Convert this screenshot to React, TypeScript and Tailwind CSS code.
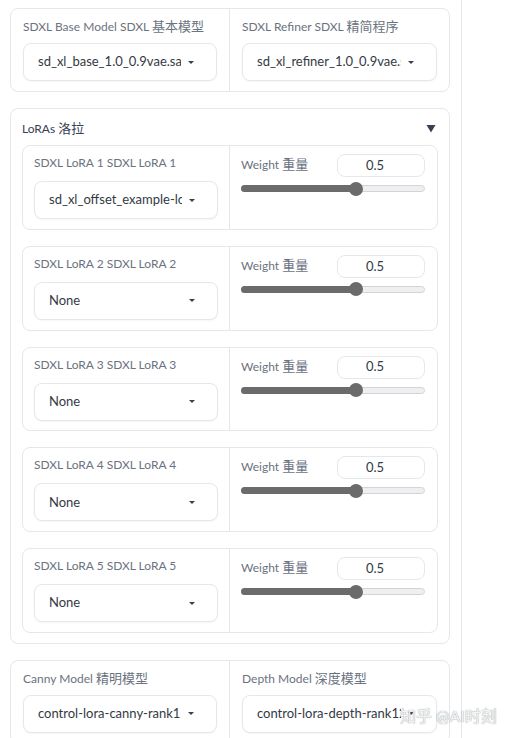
import React from "react";

const font = { fontFamily: 'Lato, "Noto Sans CJK SC", sans-serif' };

// CJK runs render a touch larger than the Latin text, like the original font pairing
function Txt({ children }: { children: string }) {
  const parts = children.split(/([\u4e00-\u9fff]+)/);
  return (
    <>
      {parts.map((p, i) =>
        /[\u4e00-\u9fff]/.test(p) ? (
          <span key={i} className="text-[13px]">
            {p}
          </span>
        ) : (
          <React.Fragment key={i}>{p}</React.Fragment>
        )
      )}
    </>
  );
}

function Caret() {
  return (
    <svg width="8" height="5" viewBox="0 0 8 5" className="shrink-0">
      <polygon points="1,1 7,1 4,4" fill="#374151" />
    </svg>
  );
}

function Dropdown({ value }: { value: string }) {
  return (
    <div className="flex h-[38px] items-center rounded-lg border border-[#e5e7eb] bg-white pl-[14px] pr-[21px] shadow-[0_1px_2px_rgba(0,0,0,0.04)]">
      <div className="flex-1 overflow-hidden whitespace-nowrap text-[13px] text-[#333a44]">
        {value}
      </div>
      <div className="ml-[6px]">
        <Caret />
      </div>
    </div>
  );
}

function Field({ label, value }: { label: string; value: string }) {
  return (
    <div className="px-3 pt-[8px] pb-[10px]">
      <div className="mb-[8px] h-[18px] whitespace-nowrap text-[12px] leading-[18px] text-[#6b7280]">
        <Txt>{label}</Txt>
      </div>
      <Dropdown value={value} />
    </div>
  );
}

function Slider({ value, min, max }: { value: number; min: number; max: number }) {
  const pct = ((value - min) / (max - min)) * 100;
  return (
    <div className="relative h-[14px]">
      <div className="absolute left-0 right-0 top-[4px] h-[7px] rounded-full border border-[#d1d5db] bg-[#efefef]" />
      <div
        className="absolute left-0 top-[4px] h-[7px] rounded-full bg-[#6b6b6b]"
        style={{ width: `${pct}%` }}
      />
      <div
        className="absolute top-[0.5px] h-[14px] w-[14px] -translate-x-1/2 rounded-full bg-[#6b6b6b]"
        style={{ left: `${pct}%` }}
      />
    </div>
  );
}

function LoraRow({ n, value }: { n: number; value: string }) {
  return (
    <div className="grid h-[84.75px] grid-cols-2 rounded-lg border border-[#e5e7eb]">
      <div className="border-r border-[#e5e7eb] px-[11px] pt-[8px]">
        <div className="mb-[9px] h-[18px] whitespace-nowrap text-[12px] leading-[18px] text-[#6b7280]">
          SDXL LoRA {n} SDXL LoRA {n}
        </div>
        <Dropdown value={value} />
      </div>
      <div className="pl-[11px] pr-[12px] pt-[8px]">
        <div className="flex items-start justify-between">
          <div className="mt-[1px] whitespace-nowrap text-[12px] leading-[18px] text-[#6b7280]">
            <Txt>Weight 重量</Txt>
          </div>
          <div className="flex h-[23px] w-[88px] items-center justify-center rounded-lg border border-[#e5e7eb] pr-3 text-[13px] text-[#333a44]">
            0.5
          </div>
        </div>
        <div className="mt-[4px]">
          <Slider value={0.5} min={-2} max={2} />
        </div>
      </div>
    </div>
  );
}

export default function App() {
  const loras = [
    "sd_xl_offset_example-lora_1.0.safetensors",
    "None",
    "None",
    "None",
    "None",
  ];
  return (
    <div className="relative h-[738px] w-[507px] overflow-hidden bg-white" style={font}>
      <div className="h-full w-[462px] border-r border-[#e5e7eb] pl-[10px] pr-[11px] pt-[8px]">
        <div className="grid grid-cols-2 rounded-lg border border-[#e5e7eb]">
          <div className="border-r border-[#e5e7eb]">
            <Field label="SDXL Base Model SDXL 基本模型" value="sd_xl_base_1.0_0.9vae.safetensors" />
          </div>
          <Field label="SDXL Refiner SDXL 精简程序" value="sd_xl_refiner_1.0_0.9vae.safetensors" />
        </div>

        <div className="mt-[16px] rounded-lg border border-[#e5e7eb] px-[11px] pt-[10px] pb-[10px]">
          <div className="mb-[8px] flex h-[18px] items-center justify-between">
            <span className="text-[12px] leading-[18px] text-[#374151]">
              <Txt>LoRAs 洛拉</Txt>
            </span>
            <svg width="10" height="9" viewBox="0 0 10 9" className="mr-[2px]">
              <polygon points="0.5,1 9.5,1 5,8.5" fill="#374151" />
            </svg>
          </div>
          <div className="flex flex-col gap-[16px]">
            {loras.map((v, i) => (
              <LoraRow key={i} n={i + 1} value={v} />
            ))}
          </div>
        </div>

        <div className="mt-[16px] grid grid-cols-2 rounded-lg border border-[#e5e7eb]">
          <div className="border-r border-[#e5e7eb]">
            <Field label="Canny Model 精明模型" value="control-lora-canny-rank128.safetensors" />
          </div>
          <Field label="Depth Model 深度模型" value="control-lora-depth-rank128.safetensors" />
        </div>
      </div>

      <div className="absolute left-[400px] top-[704px] text-[16px] leading-[24px] text-[#f4f4f4] [text-shadow:0_0_1px_#a8acb3,0_0_1px_#a8acb3]">
        知乎 @AI时刻
      </div>
    </div>
  );
}
